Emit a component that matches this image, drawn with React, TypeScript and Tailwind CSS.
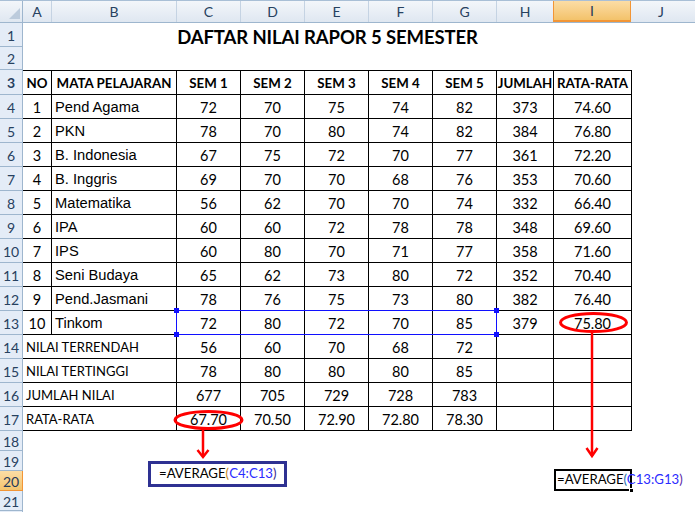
import React from "react";

const colW = [
  "w-[29px]",
  "w-[125px]",
  "w-[64px]",
  "w-[64px]",
  "w-[64px]",
  "w-[64px]",
  "w-[64px]",
  "w-[57px]",
  "w-[78px]",
];
const letters = ["A", "B", "C", "D", "E", "F", "G", "H", "I"];

const subjects: [string, string, number[], number, string][] = [
  ["1", "Pend Agama", [72, 70, 75, 74, 82], 373, "74.60"],
  ["2", "PKN", [78, 70, 80, 74, 82], 384, "76.80"],
  ["3", "B. Indonesia", [67, 75, 72, 70, 77], 361, "72.20"],
  ["4", "B. Inggris", [69, 70, 70, 68, 76], 353, "70.60"],
  ["5", "Matematika", [56, 62, 70, 70, 74], 332, "66.40"],
  ["6", "IPA", [60, 60, 72, 78, 78], 348, "69.60"],
  ["7", "IPS", [60, 80, 70, 71, 77], 358, "71.60"],
  ["8", "Seni Budaya", [65, 62, 73, 80, 72], 352, "70.40"],
  ["9", "Pend.Jasmani", [78, 76, 75, 73, 80], 382, "76.40"],
  ["10", "Tinkom", [72, 80, 72, 70, 85], 379, "75.80"],
];

const summary: [string, string[]][] = [
  ["NILAI TERRENDAH", ["56", "60", "70", "68", "72"]],
  ["NILAI TERTINGGI", ["78", "80", "80", "80", "85"]],
  ["JUMLAH NILAI", ["677", "705", "729", "728", "783"]],
  ["RATA-RATA", ["67.70", "70.50", "72.90", "72.80", "78.30"]],
];

const calibri = "font-['Lato','Open_Sans',sans-serif]";

function RowHead({ n, active = false }: { n: number; active?: boolean }) {
  return (
    <div
      className={`w-[23px] shrink-0 flex items-center justify-center border-r border-b text-[14px] leading-none pt-[2px] ${
        active
          ? "bg-gradient-to-b from-[#fbdda5] to-[#f4c46c] border-[#f29536] text-[#1f3a5a]"
          : "bg-[#e4ecf7] border-[#9eb6ce] text-[#27415f]"
      }`}
    >
      {n}
    </div>
  );
}

function Cell({
  i,
  children,
  className = "",
}: {
  i: number;
  children?: React.ReactNode;
  className?: string;
}) {
  return (
    <div
      className={`${colW[i]} shrink-0 border-r border-b border-black flex items-center justify-center overflow-hidden whitespace-nowrap pt-[2px] ${className}`}
    >
      {children}
    </div>
  );
}

function Blank({ i }: { i: number }) {
  return <div className={`${colW[i]} shrink-0`} />;
}

export default function App() {
  return (
    <div className={`relative w-[695px] h-[512px] overflow-hidden bg-white text-black ${calibri}`}>
      {/* column headers */}
      <div className="flex h-[23px] border-t border-[#a9bfd6] bg-gradient-to-b from-[#f3f6fa] to-[#dfe7f1] border-b border-b-[#9eb6ce]">
        <div className="w-[23px] shrink-0 border-r border-[#9eb6ce] flex">
          <svg width="22" height="21" viewBox="0 0 22 21">
            <polygon points="9,18 20,18 20,7" fill="#bccbdc" />
          </svg>
        </div>
        {letters.map((l, i) => (
          <div
            key={l}
            className={`${colW[i]} shrink-0 flex items-center justify-center text-[14px] border-r ${
              l === "I"
                ? "bg-gradient-to-b from-[#fbdda5] to-[#f3c26a] border-[#f29536] border-l border-b-2 -ml-px text-[#1f3a5a]"
                : "border-[#c5d3e3] text-[#27415f]"
            }`}
          >
            {l}
          </div>
        ))}
        <div className="flex-1 flex items-center justify-center text-[14px] text-[#27415f] pr-[4px]">J</div>
      </div>

      {/* row 1 - title */}
      <div className="flex h-[24px]">
        <RowHead n={1} />
        <div className="w-[609px] shrink-0 flex items-end justify-center pb-[1px]">
          <span className="text-[18.5px] font-bold leading-none tracking-[-0.1px]">DAFTAR NILAI RAPOR 5 SEMESTER</span>
        </div>
      </div>

      {/* row 2 */}
      <div className="flex h-[23px]">
        <RowHead n={2} />
      </div>

      {/* row 3 - headings */}
      <div className="flex h-[25px] text-[13.3px] font-bold">
        <RowHead n={3} />
        {["NO", "MATA PELAJARAN", "SEM 1", "SEM 2", "SEM 3", "SEM 4", "SEM 5", "JUMLAH", "RATA-RATA"].map((h, i) => (
          <Cell key={h} i={i} className="border-t">
            {h}
          </Cell>
        ))}
      </div>

      {/* rows 4-13 */}
      {subjects.map(([no, name, sems, total, avg], r) => (
        <div key={no} className="flex h-[24px] text-[14.5px]">
          <RowHead n={r + 4} />
          <Cell i={0}>{no}</Cell>
          <Cell i={1} className="!justify-start pl-[3px] font-['Liberation_Sans',Arial,sans-serif] text-[14.7px]">
            {name}
          </Cell>
          {sems.map((s, k) => (
            <Cell key={k} i={k + 2}>
              {s}
            </Cell>
          ))}
          <Cell i={7}>{total}</Cell>
          <Cell i={8}>{avg}</Cell>
        </div>
      ))}

      {/* rows 14-17 */}
      {summary.map(([label, vals], r) => (
        <div key={label} className="flex h-[24px] text-[14.5px]">
          <RowHead n={r + 14} />
          <div className="w-[154px] shrink-0 border-r border-b border-black flex items-center pl-[3px] pt-[2px] text-[13px] whitespace-nowrap">
            {label}
          </div>
          {vals.map((v, k) => (
            <Cell key={k} i={k + 2}>
              {v}
            </Cell>
          ))}
          <Cell i={7} />
          <Cell i={8} />
        </div>
      ))}

      {/* rows 18-21 */}
      {[18, 19, 20, 21].map((n) => (
        <div key={n} className="flex h-[20px]">
          <RowHead n={n} active={n === 20} />
          {n === 20 ? (
            <>
              {[0, 1, 2, 3, 4, 5, 6, 7].map((i) => (
                <Blank key={i} i={i} />
              ))}
              <div className="w-[78px] shrink-0 relative -mt-[2px] h-[22px] border-2 border-black flex items-center pl-[1px] text-[13.2px] whitespace-nowrap overflow-visible">
                <span>
                  =AVERAGE<span className="text-[#1e6fb0]">(</span>
                  <span className="text-[#2b2bff]">C13:G13</span>
                  <span className="text-[#5a2aa8]">)</span>
                </span>
                <div className="absolute -right-[4px] -bottom-[4px] w-[5px] h-[5px] bg-black border border-white" />
              </div>
            </>
          ) : null}
        </div>
      ))}
      <div className="flex h-[40px]">
        <div className="w-[23px] shrink-0 bg-[#e4ecf7] border-r border-[#9eb6ce]" />
      </div>

      {/* selection C13:G13 */}
      <div className="absolute left-[176px] top-[310px] w-[321px] h-[25px] border border-[#1010ff] pointer-events-none" />
      <div className="absolute left-[174px] top-[308px] w-[5px] h-[5px] bg-[#1010ff]" />
      <div className="absolute left-[174px] top-[332px] w-[5px] h-[5px] bg-[#1010ff]" />
      <div className="absolute left-[494px] top-[308px] w-[5px] h-[5px] bg-[#1010ff]" />
      <div className="absolute left-[494px] top-[332px] w-[5px] h-[5px] bg-[#1010ff]" />

      {/* formula callout */}
      <div className="absolute left-[148px] top-[461px] w-[139px] h-[26px] border-[3px] border-[#2e3192] bg-white flex items-center pl-[8px] text-[13.2px] whitespace-nowrap">
        =AVERAGE<span className="text-[#c8861a]">(</span>
        <span className="text-[#2b2bff]">C4:C13</span>
        <span className="text-[#3a2a8a]">)</span>
      </div>

      {/* annotations */}
      <svg className="absolute left-0 top-0 pointer-events-none" width="695" height="512" viewBox="0 0 695 512">
        <ellipse cx="208.5" cy="420" rx="33.5" ry="8.5" fill="none" stroke="#ff0000" strokeWidth="3" />
        <line x1="203" y1="429" x2="203" y2="457" stroke="#ff0000" strokeWidth="2.5" />
        <polyline points="197.5,450 203,457 208.5,450" fill="none" stroke="#ff0000" strokeWidth="2.5" />
        <ellipse cx="593.5" cy="322.5" rx="33" ry="9" fill="none" stroke="#ff0000" strokeWidth="3" />
        <line x1="592" y1="332" x2="592" y2="456" stroke="#ff0000" strokeWidth="2.5" />
        <polyline points="586.5,448 592,456 597.5,448" fill="none" stroke="#ff0000" strokeWidth="2.5" />
      </svg>
    </div>
  );
}
